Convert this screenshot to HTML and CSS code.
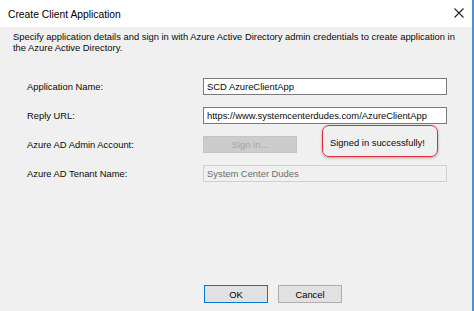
FILE: index.html
```html
<!DOCTYPE html>
<html lang="en">
<head>
  <meta charset="UTF-8">
  <title>Create Client Application</title>
  <link rel="stylesheet" href="styles.css">
</head>
<body>

<div class="dialog">
  <div class="titlebar">
    <span class="title">Create Client Application</span>
    <svg class="close" width="10" height="10" viewBox="0 0 10 10">
      <path d="M0.5 0.5 L9.5 9.5 M9.5 0.5 L0.5 9.5" stroke="#222" stroke-width="1.1" fill="none"/>
    </svg>
  </div>

  <div class="content">
    <p class="intro">Specify application details and sign in with Azure Active Directory admin credentials to create application in the Azure Active Directory.</p>

    <div class="form">
      <label>Application Name:</label>
      <div class="field">SCD AzureClientApp</div>

      <label>Reply URL:</label>
      <div class="field">https://www.systemcenterdudes.com/AzureClientApp</div>

      <label>Azure AD Admin Account:</label>
      <div><button class="signin" disabled>Sign in...</button></div>

      <label>Azure AD Tenant Name:</label>
      <div class="field disabled">System Center Dudes</div>
    </div>

    <div class="callout">Signed in successfully!</div>
  </div>

  <div class="footer">
    <button class="btn default">OK</button>
    <button class="btn">Cancel</button>
  </div>
</div>

</body>
</html>
```

FILE: styles.css
```css
html, body {
  margin: 0;
  height: 100%;
}
body {
  font-family: "Liberation Sans", Arial, sans-serif;
  font-size: 9.4px;
  color: #0a0a0a;
  background: #f0f0f0;
}
.dialog {
  height: 311px;
  box-sizing: border-box;
  border-right: 2px solid #4a90d9;
  display: flex;
  flex-direction: column;
  background: #f0f0f0;
}
.titlebar {
  height: 27px;
  background: #ffffff;
  display: flex;
  align-items: center;
  justify-content: space-between;
  padding: 0 8px 0 8px;
  flex-shrink: 0;
}
.title {
  font-size: 10.3px;
  color: #000;
  margin-top: 1px;
}
.close {
  margin-top: -2px;
}
.content {
  position: relative;
  flex: 1;
  padding: 5px 10px 0 13px;
}
.intro {
  margin: 0;
  line-height: 10.5px;
  width: 450px;
}
.form {
  display: grid;
  grid-template-columns: 176px 244px;
  grid-auto-rows: 17px;
  row-gap: 12px;
  margin-top: 25px;
  margin-left: 14px;
  align-items: center;
}
.field {
  height: 17px;
  box-sizing: border-box;
  border: 1px solid #7a7a7a;
  background: #ffffff;
  padding: 0 3px;
  line-height: 15px;
  white-space: nowrap;
  overflow: hidden;
}
.field.disabled {
  border-color: #cfcfcf;
  background: #f0f0f0;
  color: #6d6d6d;
}
.signin {
  width: 94px;
  height: 17px;
  border: 1px solid #c4c4c4;
  background: #cccccc;
  color: #a3a3a3;
  font: inherit;
  padding: 0;
  display: block;
}
.callout {
  position: absolute;
  left: 322px;
  top: 98px;
  width: 116px;
  height: 32px;
  box-sizing: border-box;
  border: 1.6px solid #dd2a33;
  border-radius: 7px;
  box-shadow: 0 1px 3px rgba(0,0,0,0.3);
  display: flex;
  align-items: center;
  padding-left: 7px;
  padding-top: 2px;
}
.footer {
  display: flex;
  gap: 10px;
  padding-left: 204px;
  height: 26px;
  flex-shrink: 0;
  align-items: flex-start;
}
.btn {
  width: 64px;
  height: 18px;
  box-sizing: border-box;
  border: 1px solid #adadad;
  background: #e1e1e1;
  font: inherit;
  color: #000;
  padding: 0;
}
.btn.default {
  border: 1.5px solid #0078d7;
}
```
